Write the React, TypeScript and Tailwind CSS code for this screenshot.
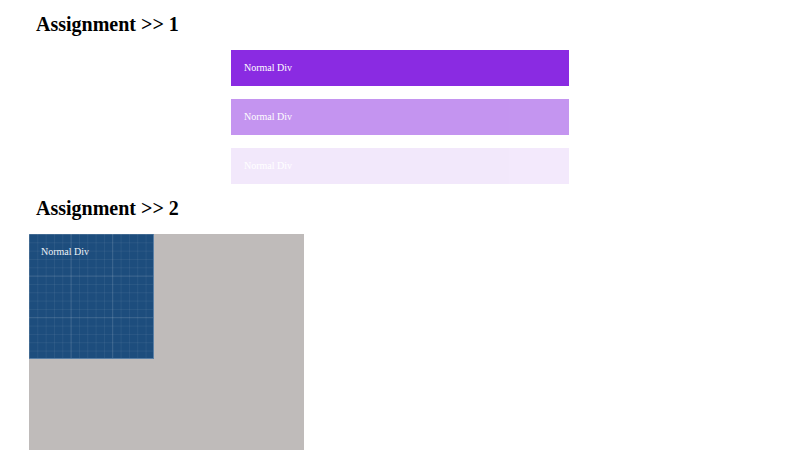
const boxes = [
  'h-[36px] flex items-center px-[13px] bg-[#8a2be2] text-white text-[10px] leading-[12px]',
  'h-[36px] flex items-center px-[13px] bg-[#8a2be2] text-white text-[10px] leading-[12px] opacity-50',
  'h-[36px] flex items-center px-[13px] bg-[#8a2be2] text-white text-[10px] leading-[12px] opacity-10',
];

export default function App() {
  return (
    <div className="w-[800px] h-[450px] overflow-hidden bg-white font-['Liberation_Serif','Times_New_Roman',serif] text-black">
      <h1 className="pt-[13px] pl-[36px] text-[20px] leading-[23px] font-bold">Assignment &gt;&gt; 1</h1>

      <div className="mt-[14px] mx-auto w-[338px] flex flex-col gap-[13px]">
        {boxes.map((cls, i) => (
          <div key={i} className={cls}>
            Normal Div
          </div>
        ))}
      </div>

      <h1 className="mt-[13px] pl-[36px] text-[20px] leading-[23px] font-bold">Assignment &gt;&gt; 2</h1>

      <div className="mt-[14px] ml-[29px] w-[275px] h-[216px] bg-[#bfbbba]">
        {/* blueprint-style grid */}
        <div className="w-[125px] h-[125px] p-[12px] text-[10px] leading-[12px] text-[#eef2f8] bg-[#1d4d7d] bg-[linear-gradient(to_right,rgba(255,255,255,0.1)_1px,transparent_1px),linear-gradient(to_bottom,rgba(255,255,255,0.1)_1px,transparent_1px),linear-gradient(to_right,rgba(255,255,255,0.06)_1px,transparent_1px),linear-gradient(to_bottom,rgba(255,255,255,0.06)_1px,transparent_1px)] bg-[size:41.6px_41.6px,41.6px_41.6px,8.33px_8.33px,8.33px_8.33px] border-r border-b border-[#5a7fa5]">
          Normal Div
        </div>
      </div>
    </div>
  );
}
